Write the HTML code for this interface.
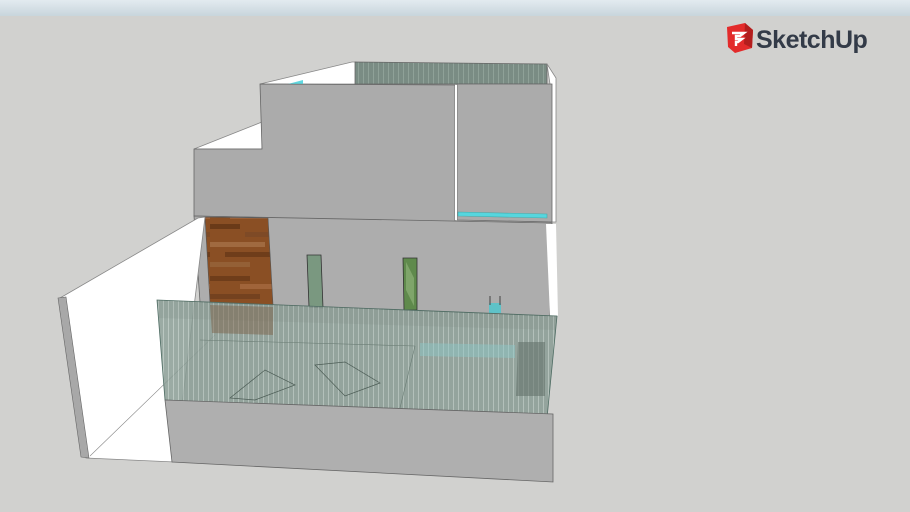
<!DOCTYPE html>
<html><head><meta charset="utf-8"><style>
html,body{margin:0;padding:0;width:910px;height:512px;overflow:hidden;background:#d1d1cf}
</style></head><body>
<svg width="910" height="512" viewBox="0 0 910 512" xmlns="http://www.w3.org/2000/svg">
<defs>
<linearGradient id="top" x1="0" y1="0" x2="0" y2="1"><stop offset="0" stop-color="#e3ebf0"/><stop offset="1" stop-color="#c8d5dc"/></linearGradient>
<pattern id="str" width="5" height="10" patternUnits="userSpaceOnUse"><rect width="5" height="10" fill="#899c94"/><rect x="3" width="1" height="10" fill="#aebdb6"/></pattern>
<pattern id="str2" width="5" height="10" patternUnits="userSpaceOnUse"><rect width="5" height="10" fill="#7a8c84"/><rect x="3" width="1" height="10" fill="#8fa198"/></pattern>
<pattern id="wood" width="70" height="90" patternUnits="userSpaceOnUse">
<rect width="70" height="90" fill="#8a4f24"/>
<rect y="6" width="40" height="5" fill="#6f3d1a"/><rect x="30" y="14" width="40" height="5" fill="#a0643a"/>
<rect y="24" width="50" height="5" fill="#74421f"/><rect x="20" y="34" width="50" height="5" fill="#9a6038"/>
<rect y="44" width="30" height="5" fill="#6a3a18"/><rect x="35" y="52" width="35" height="5" fill="#7e4a26"/>
<rect y="62" width="55" height="5" fill="#a06a40"/><rect x="15" y="72" width="55" height="5" fill="#6f3d1a"/>
<rect y="82" width="40" height="5" fill="#946036"/>
</pattern>
</defs>
<rect width="910" height="16" fill="url(#top)"/>
<polygon points="260,84 352,62 356,62 356,84" fill="#ffffff" stroke="#888" stroke-width="0.8"/>
<polygon points="288,84 303,80 303,84" fill="#5fd8e0"/>
<polygon points="355,62 547,64 547,84 355,84" fill="url(#str2)" stroke="#666" stroke-width="0.8"/>
<polygon points="547,64 556,78 556,222 550,222 550,84" fill="#fff" stroke="#888" stroke-width="0.8"/>
<polygon points="194,149 262,122 262,149" fill="#fff" stroke="#888" stroke-width="0.8"/>
<polygon points="260,84 455,85 455,222 194,216 194,149 262,149" fill="#ababab" stroke="#666" stroke-width="0.8"/>
<polygon points="457,84 552,84 552,222 457,220" fill="#ababab" stroke="#666" stroke-width="0.8"/>
<polygon points="455,85 457,85 457,220 455,220" fill="#fff"/>
<polygon points="458,212 547,214 547,218 458,216" fill="#56d6de" stroke="#4aa" stroke-width="0.6"/>
<polygon points="194,216 552,223 550,316 200,302" fill="#adadad" stroke="#666" stroke-width="0.8"/>
<polygon points="546,224 556,224 558,316 550,316" fill="#fff"/>
<polygon points="205,217 268,218 273,305 210,303" fill="url(#wood)" stroke="#555" stroke-width="0.6"/>
<polygon points="307,255 321,255 323,308 309,307" fill="#7a9880" stroke="#333" stroke-width="0.8"/>
<polygon points="403,258 417,258 417,310 404,310" fill="#5f8a4c" stroke="#333" stroke-width="0.8"/>
<polygon points="406,262 414,278 414,306 406,290" fill="#7fa56a"/>
<rect x="489" y="303" width="12" height="10" fill="#5fc2c8"/>
<path d="M490,305 V296 M500,305 V296" stroke="#555" stroke-width="1.2" fill="none"/>
<polygon points="60,298 198,218 205,217 175,462 86,458" fill="#ffffff" stroke="#888" stroke-width="0.8"/>
<polygon points="58,298 66,297 89,458 81,457" fill="#a8a8a8" stroke="#666" stroke-width="0.6"/>
<line x1="90" y1="456" x2="215" y2="335" stroke="#888" stroke-width="0.6"/>
<polygon points="157,300 557,316 547,418 165,400" fill="url(#str)" fill-opacity="0.85" stroke="#4d6b62" stroke-width="0.8"/>
<polygon points="157,300 557,316 556,330 158,318" fill="#6f807a" fill-opacity="0.15"/>
<polygon points="210,305 273,307 273,335 212,333" fill="#7a5a40" fill-opacity="0.45"/>
<polygon points="420,343 515,345 515,358 420,356" fill="#8ccaca" fill-opacity="0.45"/>
<polygon points="518,342 545,342 545,396 516,396" fill="#5e6e66" fill-opacity="0.55"/>
<path d="M230,398 L265,370 L295,385 L255,400 Z M315,365 L345,362 L380,383 L345,396 Z" stroke="#4c5c55" stroke-width="0.7" fill="none"/>
<line x1="200" y1="340" x2="415" y2="346" stroke="#6a7c74" stroke-width="0.6"/>
<line x1="415" y1="346" x2="400" y2="408" stroke="#6a7c74" stroke-width="0.6"/>
<polygon points="165,400 553,414 553,482 172,462" fill="#afafaf" stroke="#666" stroke-width="0.8"/>
<g transform="translate(725,22)">
<polygon points="2,5 20,1 28,8 27,26 10,31 3,25" fill="#e32b2b"/>
<polygon points="20,1 28,8 27,26 19,22" fill="#b31e1e"/>
<path d="M7,11 H19 L15,14 H11 V17 H17 L13,20 H11 V24" stroke="#fff" stroke-width="2.4" fill="none"/>
</g>
<text x="756" y="48" font-family="Liberation Sans, sans-serif" font-weight="bold" font-size="25" fill="#333b48" letter-spacing="-0.5">SketchUp</text>
</svg>
</body></html>
